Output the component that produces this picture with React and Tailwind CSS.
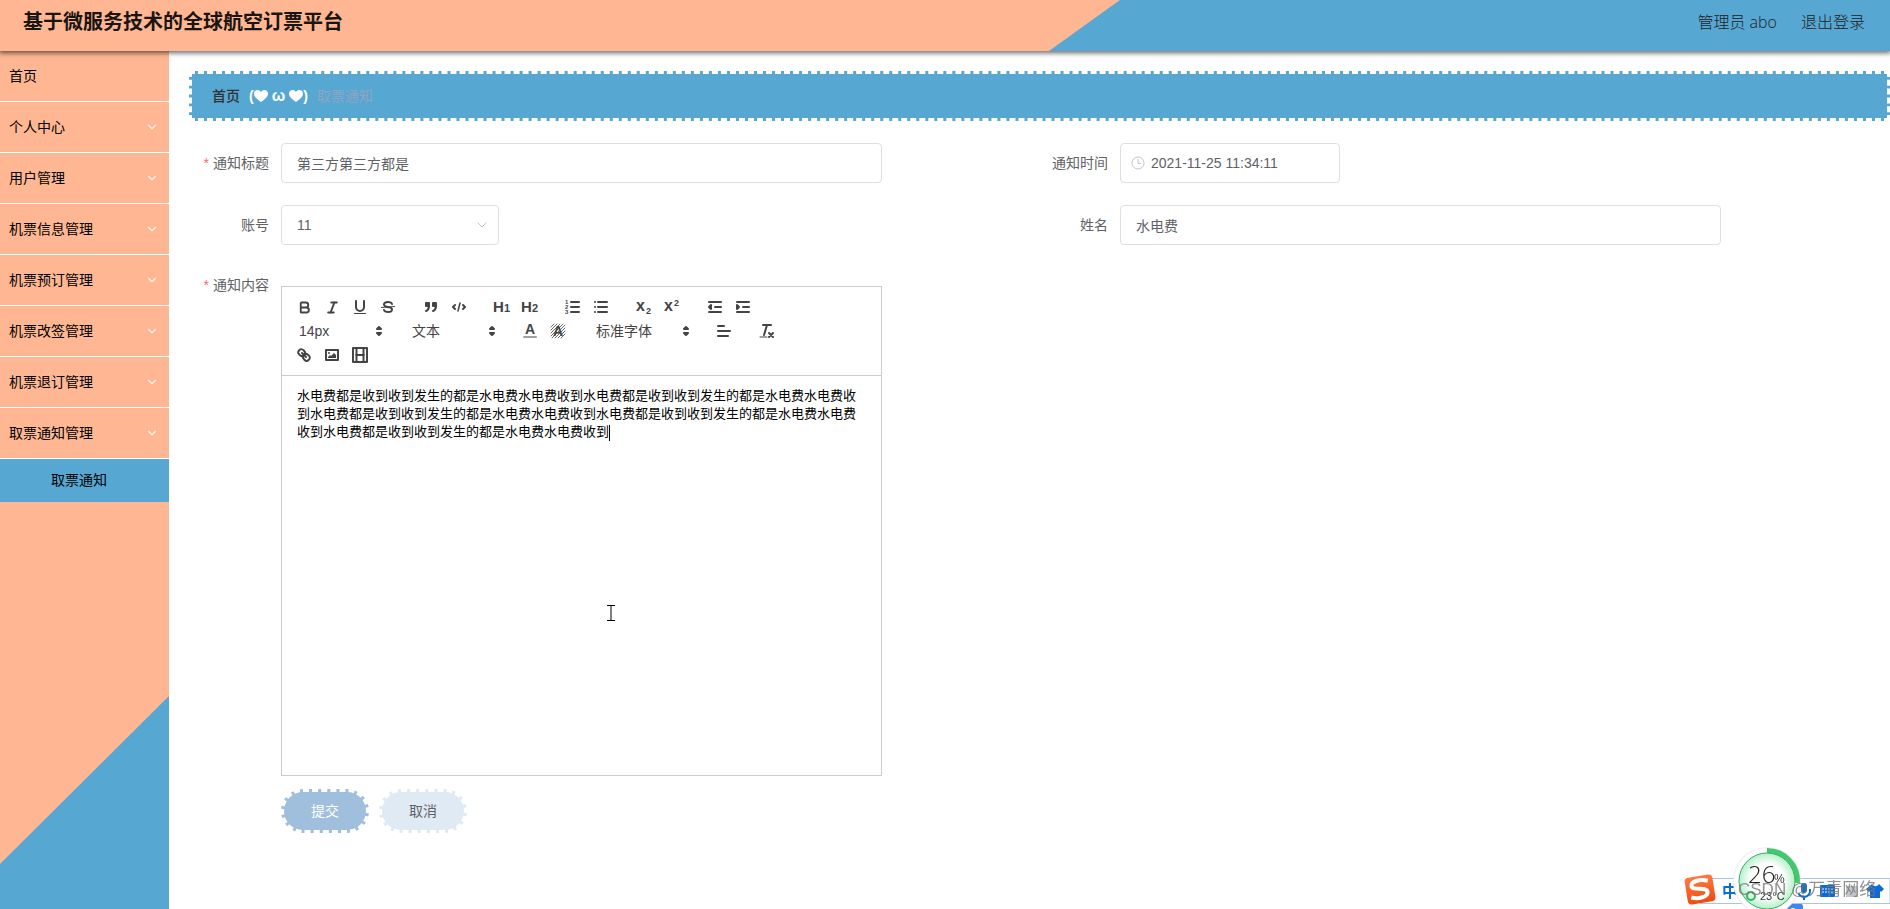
import React, { useState } from 'react';
import { ChevronDown, Bold, Italic } from 'lucide-react';

const menus = [
  { name: '首页', leaf: true },
  { name: '个人中心' },
  { name: '用户管理' },
  { name: '机票信息管理' },
  { name: '机票预订管理' },
  { name: '机票改签管理' },
  { name: '机票退订管理' },
  { name: '取票通知管理', children: ['取票通知'] },
];

const sentence = '水电费都是收到收到发生的都是水电费水电费收到';

const Header = () => (
  <header className="relative z-10 flex h-[51px] items-center justify-between bg-[#ffb793] pb-[7px] pl-[23px] pr-[25px] shadow-[0_1px_5px_1px_rgba(0,0,0,0.6)]">
    <div className="absolute inset-y-0 right-0 w-[44.5%] bg-[#57a7d3] [clip-path:polygon(71px_0,100%_0,100%_100%,0_100%)]" />
    <h1 className="relative text-[20px] leading-7 font-bold text-[#1a1512]">基于微服务技术的全球航空订票平台</h1>
    <div className="relative flex gap-6 font-['Open_Sans','Noto_Sans_CJK_SC',sans-serif] text-[16px] font-light text-[#222]">
      <span>管理员 abo</span>
      <button type="button">退出登录</button>
    </div>
  </header>
);

const Sidebar = () => (
  <aside className="flex w-[169px] shrink-0 flex-col bg-[#ffb793] text-[14px] text-black">
    <nav>
      <ul>
        {menus.map((menu) => (
          <li key={menu.name}>
            <button
              type="button"
              className="flex h-[51px] w-full items-center justify-between border-b border-white pl-[9px] pr-[10px] text-left"
            >
              {menu.name}
              {!menu.leaf && <ChevronDown size={14} strokeWidth={2} className="text-white/80" />}
            </button>
            {menu.children?.map((child) => (
              <a key={child} href="#notice" className="flex h-[43px] items-center bg-[#57a7d3] pl-[51px]">
                {child}
              </a>
            ))}
          </li>
        ))}
      </ul>
    </nav>
    <div className="mt-auto h-[213px] bg-[#57a7d3] [clip-path:polygon(0_168px,100%_0,100%_100%,0_100%)]" />
  </aside>
);

const Heart = () => (
  <svg viewBox="0 0 14 12" className="h-[12px] w-[14px] fill-white">
    <path d="M7 12C4 9.6 0 7.200 0 3.700 0 1.500 1.600 0 3.600 0 5 0 6.300.8 7 2 7.700.8 9 0 10.400 0 12.400 0 14 1.500 14 3.700 14 7.200 10 9.600 7 12Z" />
  </svg>
);

const Breadcrumb = () => (
  <nav className="flex h-[50px] items-center border-[3px] border-dashed border-white bg-[#57a7d3] pl-5 text-[14px]">
    <a href="#home" className="font-medium text-[#303133]">首页</a>
    <span className="mx-[9px] flex items-center font-bold text-white">
      (<Heart /><span className="mx-1 text-[16px]">ω</span><Heart />)
    </span>
    <span className="text-[#8fa5bd]">取票通知</span>
  </nav>
);

const Field = ({ id, label, required, top, children }) => (
  <div className="flex">
    <label
      htmlFor={id}
      id={`${id}-label`}
      className={`w-20 shrink-0 whitespace-nowrap pr-3 text-right text-[14px] text-[#606266] ${top ? 'leading-9' : 'leading-10'}`}
    >
      {required && <span className="mr-1 text-[#f56c6c]">*</span>}
      {label}
    </label>
    {children}
  </div>
);

const inputClass = 'h-10 rounded border border-[#dcdfe6] bg-white text-[14px] text-[#606266] outline-none';

/* toolbar pieces */

const Icon = ({ children }) => (
  <svg viewBox="0 0 18 18" className="h-[18px] w-[18px] fill-none stroke-[#444] stroke-2 [stroke-linecap:round] [stroke-linejoin:round]">
    {children}
  </svg>
);

const Glyph = ({ x, y, size, children }) => (
  <text x={x} y={y} fontSize={size} fontWeight="700" fill="#444" stroke="none">
    {children}
  </text>
);

const Tool = ({ label, children }) => (
  <button type="button" aria-label={label} className="flex h-6 w-7 items-center justify-center text-[#444]">
    {children}
  </button>
);

const Group = ({ children }) => <span className="mr-[15px] flex">{children}</span>;

const Picker = ({ label, value, wide }) => (
  <span className={`relative block h-6 ${wide ? 'w-[108px]' : 'w-[98px]'}`}>
    <select
      aria-label={label}
      defaultValue={value}
      className="h-6 w-full appearance-none bg-transparent pl-[9px] text-[14px] text-[#444] outline-none"
    >
      <option>{value}</option>
    </select>
    <svg viewBox="0 0 18 18" className="pointer-events-none absolute top-[3px] right-0 h-[18px] w-[18px] fill-[#444] stroke-[#444] stroke-2 [stroke-linejoin:round]">
      <polygon points="7 11 9 13 11 11" />
      <polygon points="7 7 9 5 11 7" />
    </svg>
  </span>
);

const Toolbar = () => (
  <div className="flex flex-wrap border-b border-[#ccc] p-2">
    <Group>
      <Tool label="bold"><Bold size={15} strokeWidth={3} /></Tool>
      <Tool label="italic"><Italic size={15} strokeWidth={3} /></Tool>
      <Tool label="underline">
        <Icon>
          <path d="M5,3V9a4.012,4.012,0,0,0,4,4H9a4.012,4.012,0,0,0,4-4V3" />
          <rect x="3" y="15" width="12" height="1" rx="0.5" fill="#444" stroke="none" />
        </Icon>
      </Tool>
      <Tool label="strike">
        <Icon>
          <path d="M13 6C12.500 4.700 11 4 9 4 6.700 4 5 5 5 6.500 5 8.300 7 8.700 9 9 11 9.300 13 9.700 13 11.500 13 13 11.300 14 9 14 7 14 5.500 13.300 5 12" />
          <line x1="15.500" x2="2.500" y1="8.500" y2="9.500" strokeWidth="1" />
        </Icon>
      </Tool>
    </Group>
    <Group>
      <Tool label="blockquote">
        <Icon>
          <rect x="4" y="5" width="3" height="3" fill="#444" />
          <rect x="11" y="5" width="3" height="3" fill="#444" />
          <path d="M7,8c0,4.031-3,5-3,5" fill="#444" />
          <path d="M14,8c0,4.031-3,5-3,5" fill="#444" />
        </Icon>
      </Tool>
      <Tool label="code block">
        <Icon>
          <polyline points="5 7 3 9 5 11" />
          <polyline points="13 7 15 9 13 11" />
          <line x1="10" x2="8" y1="5" y2="13" strokeWidth="1.500" />
        </Icon>
      </Tool>
    </Group>
    <Group>
      <Tool label="heading 1">
        <Icon><Glyph x={0} y={14} size={15}>H</Glyph><Glyph x={11} y={14} size={11}>1</Glyph></Icon>
      </Tool>
      <Tool label="heading 2">
        <Icon><Glyph x={0} y={14} size={15}>H</Glyph><Glyph x={11} y={14} size={11}>2</Glyph></Icon>
      </Tool>
    </Group>
    <Group>
      <Tool label="ordered list">
        <Icon>
          <path d="M7 4H15M7 9H15M7 14H15" />
          <Glyph x={1} y={6} size={6}>1</Glyph>
          <Glyph x={1} y={11} size={6}>2</Glyph>
          <Glyph x={1} y={16} size={6}>3</Glyph>
        </Icon>
      </Tool>
      <Tool label="bullet list">
        <Icon><path d="M6 4H15M6 9H15M6 14H15M3 4H3M3 9H3M3 14H3" /></Icon>
      </Tool>
    </Group>
    <Group>
      <Tool label="subscript">
        <Icon><Glyph x={1} y={13} size={16}>x</Glyph><Glyph x={11} y={16} size={9}>2</Glyph></Icon>
      </Tool>
      <Tool label="superscript">
        <Icon><Glyph x={1} y={13} size={16}>x</Glyph><Glyph x={11} y={8} size={9}>2</Glyph></Icon>
      </Tool>
    </Group>
    <Group>
      <Tool label="outdent">
        <Icon>
          <path d="M3 14H15M3 4H15M9 9H15" />
          <polyline points="5 7 5 11 3 9 5 7" fill="#444" />
        </Icon>
      </Tool>
      <Tool label="indent">
        <Icon>
          <path d="M3 14H15M3 4H15M9 9H15" />
          <polyline points="3 7 3 11 5 9 3 7" fill="#444" />
        </Icon>
      </Tool>
    </Group>
    <Group><Picker label="字号" value="14px" /></Group>
    <Group><Picker label="标题" value="文本" /></Group>
    <Group>
      <Tool label="text color">
        <Icon>
          <Glyph x={4} y={12} size={14}>A</Glyph>
          <line x1="3" x2="15" y1="15" y2="15" opacity="0.5" />
        </Icon>
      </Tool>
      <Tool label="background color">
        <Icon>
          <path strokeWidth="1" opacity="0.8" d="M2 5L5 2M2 8L8 2M2 11L11 2M2 14L14 2M3 16L16 3M6 16L16 6M9 16L16 9M12 16L16 12" />
          <Glyph x={4} y={14} size={14}>A</Glyph>
        </Icon>
      </Tool>
    </Group>
    <Group><Picker label="字体" value="标准字体" wide /></Group>
    <Group>
      <Tool label="align">
        <Icon><path d="M3 9H15M3 14H13M3 4H9" /></Icon>
      </Tool>
    </Group>
    <Group>
      <Tool label="clear format">
        <Icon>
          <path d="M5 3H13M6 13L9 3" />
          <path d="M11 11L15 15M15 11L11 15" />
          <line x1="2" x2="9" y1="15" y2="15" strokeWidth="1" />
        </Icon>
      </Tool>
    </Group>
    <Group>
      <Tool label="link">
        <Icon>
          <line x1="7" x2="11" y1="7" y2="11" />
          <path d="M8.900,4.577a3.476,3.476,0,0,1,.36,4.679A3.476,3.476,0,0,1,4.577,8.900C3.185,7.500,2.035,6.400,4.217,4.217S7.500,3.185,8.900,4.577Z" />
          <path d="M13.423,9.100a3.476,3.476,0,0,0-4.679-.36,3.476,3.476,0,0,0,.36,4.679c1.392,1.392,2.500,2.542,4.679.36S14.815,10.500,13.423,9.100Z" />
        </Icon>
      </Tool>
      <Tool label="image">
        <Icon>
          <rect x="3" y="4" width="12" height="10" />
          <circle cx="6" cy="7" r="1" fill="#444" stroke="none" />
          <polyline points="5 12 5 11 7 9 8 10 11 7 13 9 13 12 5 12" fill="#444" stroke="none" />
        </Icon>
      </Tool>
      <Tool label="video">
        <Icon>
          <rect x="2" y="2" width="14" height="14" />
          <path d="M5.500 2V16M12.500 2V16M5 9H13" strokeWidth="2" />
          <path d="M3 5H4M3 8H4M3 11H4M3 14H4M14 5H15M14 8H15M14 11H15M14 14H15" stroke="#fff" strokeWidth="1" strokeLinecap="butt" />
        </Icon>
      </Tool>
    </Group>
  </div>
);

const Editor = () => (
  <div className="mt-[19px] w-[71.6%] border border-[#ccc]">
    <Toolbar />
    <div
      contentEditable
      suppressContentEditableWarning
      role="textbox"
      aria-labelledby="content-label"
      className="relative h-[399px] px-[15px] py-[11px] text-[13px] leading-[18px] break-all text-black outline-none"
    >
      {sentence.repeat(5)}
      <span className="inline-block h-4 w-px bg-black align-middle" />
      {/* text cursor */}
      <svg viewBox="0 0 8 16" className="absolute top-[229px] left-[325px] h-4 w-2 fill-none stroke-black">
        <path d="M0 .5H8M4 1V15M0 15.500H8" />
      </svg>
    </div>
  </div>
);

const NoticeForm = () => {
  const [title, setTitle] = useState('第三方第三方都是');
  const [time, setTime] = useState('2021-11-25 11:34:11');
  const [name, setName] = useState('水电费');

  return (
    <form className="grid grid-cols-2 gap-y-[22px] pt-[22px] pr-[11px] pl-3" onSubmit={(e) => e.preventDefault()}>
      <Field id="title" label="通知标题" required>
        <input id="title" value={title} onChange={(e) => setTitle(e.target.value)} className={`${inputClass} w-[71.6%] px-[15px]`} />
      </Field>
      <Field id="time" label="通知时间">
        <div className="relative w-[220px]">
          <input id="time" value={time} onChange={(e) => setTime(e.target.value)} className={`${inputClass} w-full pr-2 pl-[30px]`} />
          <svg viewBox="0 0 14 14" className="absolute top-[13px] left-[11px] h-[14px] w-[14px] fill-none stroke-[#c0c4cc]">
            <circle cx="7" cy="7" r="6" />
            <path d="M7 3V7.500H10" />
          </svg>
        </div>
      </Field>
      <Field id="account" label="账号">
        <div className="relative w-[218px]">
          <select id="account" className={`${inputClass} w-full appearance-none px-[15px]`}>
            <option>11</option>
          </select>
          <ChevronDown size={16} strokeWidth={1} className="pointer-events-none absolute top-3 right-[9px] text-[#a0a4ac]" />
        </div>
      </Field>
      <Field id="name" label="姓名">
        <input id="name" value={name} onChange={(e) => setName(e.target.value)} className={`${inputClass} w-[71.6%] px-[15px]`} />
      </Field>
      <div className="col-start-1">
        <Field id="content" label="通知内容" required top>
          <Editor />
        </Field>
        <div className="mt-[13px] ml-20 flex gap-[10px] text-[14px]">
          <button type="submit" className="h-[44px] w-[88px] rounded-[22px] border-[3px] border-dashed border-white bg-[#a0bfdc] text-white">
            提交
          </button>
          <button type="button" className="h-[44px] w-[88px] rounded-[22px] border-[3px] border-dashed border-white bg-[#e0eaf5] text-[#606266]">
            取消
          </button>
        </div>
      </div>
    </form>
  );
};

/* desktop input bar, weather gauge and watermark over the page corner */
const DesktopOverlay = () => (
  <div className="pointer-events-none fixed right-0 bottom-0 h-[69px] w-[220px] overflow-hidden">
    <svg viewBox="0 0 220 69" className="h-[69px] w-[220px]">
      <defs>
        <radialGradient id="gauge">
          <stop offset="0.6" stopColor="#fff" />
          <stop offset="1" stopColor="#b4f0c8" />
        </radialGradient>
        <linearGradient id="logo" x1="0" y1="0" x2="0" y2="1">
          <stop offset="0" stopColor="#ff7a40" />
          <stop offset="1" stopColor="#ee4c14" />
        </linearGradient>
      </defs>
      <path d="M30 38.500H220V63.500H30" fill="#fff" stroke="#a9c4e6" />
      <g transform="rotate(-9 30 49)">
        <rect x="16" y="36" width="28" height="27" rx="4" fill="url(#logo)" />
        <path d="M39 42C31 39 22 40 22 45 22 50 37 47 37 53 37 58 27 59 20 56" fill="none" stroke="#fff" strokeWidth="4" />
      </g>
      <text x="52" y="57" fontSize="16" fontWeight="700" fill="#0b6bd8">中</text>
      <g fill="#0b6bd8">
        <rect x="131" y="43" width="6" height="10" rx="3" />
        <path d="M128 49V51A6 6 0 0 0 140 51V49M134 56V60" fill="none" stroke="#0b6bd8" strokeWidth="2" />
        <rect x="150" y="45" width="15" height="12" rx="1" />
        <path d="M152 49H163M152 52H163" stroke="#fff" strokeDasharray="2 1" />
        <path d="M202 44C204 47 207 47 209 44L214 49 211 52 210 51V58H200V51L199 52 196 49Z" />
      </g>
      <path d="M176 46H188V57H176Z" fill="#c4c8ce" />
      <rect x="107" y="64" width="26" height="14" rx="2" fill="#3f86f0" />
      <text x="112" y="77" fontSize="13" fill="#fff">22</text>
      <circle cx="97" cy="41" r="34" fill="#eee" />
      <circle cx="97" cy="41" r="33" fill="#fff" />
      <path d="M97 10.500A30.500 30.500 0 0 1 127.500 43" fill="none" stroke="#43c96d" strokeWidth="5" />
      <circle cx="97" cy="41" r="28" fill="url(#gauge)" stroke="#36ad62" />
      <text x="78" y="43" fontSize="24" fontWeight="300" fill="#222" className="font-['Open_Sans']">26</text>
      <text x="104" y="43" fontSize="12" fill="#333">%</text>
      <circle cx="81" cy="56" r="4" fill="none" stroke="#2fb866" strokeWidth="2" />
      <text x="90" y="60" fontSize="11" fill="#333">23°C</text>
    </svg>
    <span className="absolute top-[38px] left-[68px] text-[17px] leading-6 whitespace-nowrap text-[#777]/80">CSDN @万青网络</span>
  </div>
);

const App = () => (
  <div className="flex min-h-screen flex-col bg-white font-['Liberation_Sans','Noto_Sans_CJK_SC',sans-serif]">
    <Header />
    <div className="flex flex-1">
      <Sidebar />
      <main className="min-w-0 flex-1 pt-5 pl-5">
        <Breadcrumb />
        <NoticeForm />
      </main>
    </div>
    <DesktopOverlay />
  </div>
);

export default App;
